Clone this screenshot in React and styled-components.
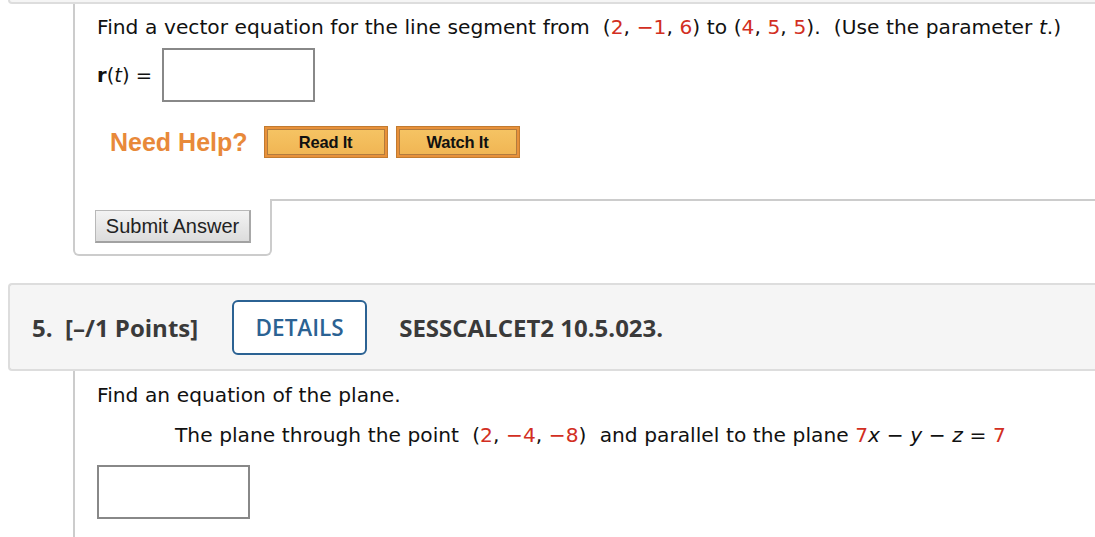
import styled, { createGlobalStyle } from 'styled-components';

const GlobalStyle = createGlobalStyle`
  html, body {
    margin: 0;
    padding: 0;
    background: #ffffff;
    overflow: hidden;
  }
`;

const Page = styled.div`
  width: 1110px;
  padding-left: 8px;
  font-family: "DejaVu Sans", Verdana, sans-serif;
  color: #111;
`;

const PrevHeaderEdge = styled.div`
  height: 3px;
  background: #f5f5f5;
  border: 2px solid #dddddd;
  border-top: none;
  border-radius: 0 0 4px 4px;
  margin-top: -1px;
`;

const Content = styled.div`
  margin-left: 65px;
  border-left: 2px solid #cccccc;
  padding: ${p => p.$top}px 0 ${p => p.$bottom}px 22px;
  min-height: ${p => p.$min || 0}px;
`;

const Prompt = styled.div`
  font-size: 20.2px;
  line-height: 24px;
  word-spacing: 0.2px;
  white-space: pre;
  margin-left: ${p => p.$indent || 0}px;
  margin-top: ${p => p.$gap || 0}px;
`;

const Red = styled.span`
  color: #d22e22;
`;

const Var = styled.i`
  font-style: italic;
`;

const Bold = styled.b`
  font-weight: bold;
`;

const AnswerRow = styled.div`
  display: flex;
  align-items: center;
  gap: 10px;
  margin-top: ${p => p.$gap}px;
  font-size: 19.5px;
`;

const AnswerBox = styled.div`
  width: 149px;
  height: 50px;
  border: 2px solid #888888;
  background: #fff;
`;

const HelpRow = styled.div`
  display: flex;
  align-items: center;
  margin-top: 24px;
  padding-left: 13px;
  height: 32px;
`;

const HelpLabel = styled.span`
  font-family: "Liberation Sans", Arial, sans-serif;
  font-weight: bold;
  font-size: 25px;
  color: #e8893a;
  margin-right: 16px;
`;

const HelpButton = styled.button`
  width: 124px;
  height: 32px;
  margin-right: 8px;
  border: 1px solid #c27b30;
  background: linear-gradient(#f6c565, #f0b452);
  box-shadow: inset 0 0 0 2px #e8913a, inset 0 0 0 3px #b27b3e;
  font-family: "Liberation Sans", Arial, sans-serif;
  font-weight: bold;
  font-size: 16.5px;
  letter-spacing: -0.2px;
  color: #111;
  padding: 0;
`;

const SubmitRow = styled.div`
  display: flex;
  margin-left: 65px;
`;

const SubmitCell = styled.div`
  border: 2px solid #cccccc;
  border-top: none;
  border-radius: 0 0 6px 6px;
  padding: 11px 19px 11px 20px;
`;

const Filler = styled.div`
  flex: 1;
  border-top: 2px solid #cccccc;
`;

const SubmitButton = styled.button`
  width: 156px;
  height: 33px;
  padding: 0;
  border: 1px solid #b8b8b8;
  border-bottom: 2px solid #a2a2a2;
  border-right: 2px solid #a8a8a8;
  background: linear-gradient(#f3f3f3, #dcdcdc);
  font-family: "Liberation Sans", Arial, sans-serif;
  font-size: 20px;
  color: #222;
`;

const Header = styled.div`
  margin-top: 27px;
  height: 84px;
  display: flex;
  align-items: center;
  padding-left: 22px;
  background: #f5f5f5;
  border: 2px solid #dddddd;
  border-right: none;
  border-radius: 4px 0 0 4px;
  font-family: "Open Sans", sans-serif;
  font-weight: 700;
  font-size: 24px;
  color: #3a3a3a;
`;

const Points = styled.span`
  white-space: pre;
  margin-right: 34px;
`;

const DetailsButton = styled.button`
  width: 135px;
  height: 55px;
  border: 2px solid #2b6293;
  border-radius: 6px;
  background: #fff;
  font-family: "Open Sans", sans-serif;
  font-weight: 600;
  font-size: 22.5px;
  color: #2b6293;
  margin-right: 32px;
  padding: 0;
`;

const Code = styled.span``;

export default function App() {
  return (
    <>
      <GlobalStyle />
      <Page>
        <PrevHeaderEdge />
        <Content $top={11} $bottom={41}>
          <Prompt>
            Find a vector equation for the line segment from  (<Red>2</Red>, <Red>−1</Red>, <Red>6</Red>) to (<Red>4</Red>, <Red>5</Red>, <Red>5</Red>).  (Use the parameter <Var>t</Var>.)
          </Prompt>
          <AnswerRow $gap={9}>
            <span><Bold>r</Bold>(<Var>t</Var>) =</span>
            <AnswerBox />
          </AnswerRow>
          <HelpRow>
            <HelpLabel>Need Help?</HelpLabel>
            <HelpButton>Read It</HelpButton>
            <HelpButton>Watch It</HelpButton>
          </HelpRow>
        </Content>
        <SubmitRow>
          <SubmitCell>
            <SubmitButton>Submit Answer</SubmitButton>
          </SubmitCell>
          <Filler />
        </SubmitRow>
        <Header>
          <Points>5.  [–/1 Points]</Points>
          <DetailsButton>DETAILS</DetailsButton>
          <Code>SESSCALCET2 10.5.023.</Code>
        </Header>
        <Content $top={12} $bottom={0} $min={170}>
          <Prompt>Find an equation of the plane.</Prompt>
          <Prompt $indent={78} $gap={16}>
            The plane through the point  (<Red>2</Red>, <Red>−4</Red>, <Red>−8</Red>)  and parallel to the plane <Red>7</Red><Var>x</Var> − <Var>y</Var> − <Var>z</Var> = <Red>7</Red>
          </Prompt>
          <AnswerRow $gap={18}>
            <AnswerBox />
          </AnswerRow>
        </Content>
      </Page>
    </>
  );
}
